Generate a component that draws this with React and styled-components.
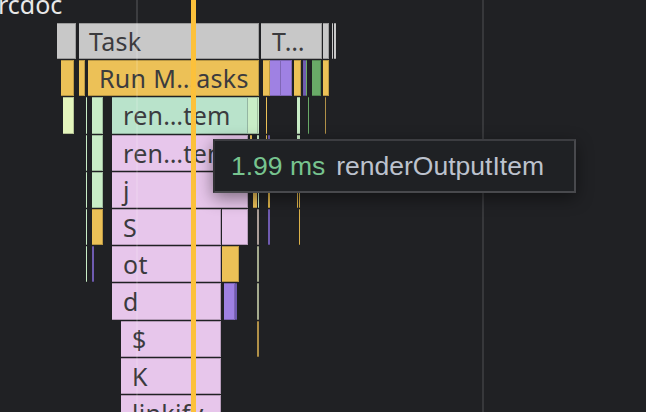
import React from "react";
import styled, { createGlobalStyle } from "styled-components";

const colors = {
  task: "#c8c8c8",
  yellow: "#ecc157",
  purple: "#9f81e3",
  deepPurple: "#6f5bb0",
  green: "#69aa67",
  pale: "#e4f5bd",
  mint: "#c9edc7",
  teal: "#b9e3cb",
  pink: "#e7c6eb",
  tan: "#b09048",
  sage: "#a5ab8e",
  taupe: "#ab9e98",
  sun: "#dcb24a",
};

// each row: [left, width, colour, label?, label inset?]
const rows = [
  [
    [57, 19, "task"],
    [79, 180, "task", "Task", 10],
    [261, 61, "task", "T…", 11],
    [323, 6, "task"],
    [332, 1, "task"],
    [333.5, 2.5, "task"],
  ],
  [
    [61, 13, "yellow"],
    [79, 6, "yellow"],
    [88, 171, "yellow", "Run M…asks", 11],
    [263, 7, "yellow"],
    [270, 10.5, "purple"],
    [281, 11, "purple"],
    [294, 6.5, "yellow"],
    [303, 3, "deepPurple"],
    [306, 1, "green"],
    [312, 9, "green"],
    [323, 6, "yellow"],
  ],
  [
    [63, 11, "pale"],
    [85.5, 1.5, "mint"],
    [92, 11, "mint"],
    [112, 136, "teal", "ren…tem", 11],
    [248, 9.5, "mint"],
    [258, 1, "mint"],
    [266, 1, "yellow"],
    [297, 3, "mint"],
    [308, 1, "green"],
    [325, 1, "tan"],
  ],
  [
    [85.5, 1.5, "mint"],
    [92, 11, "mint"],
    [112, 136, "pink", "ren…tem", 11],
    [250, 2, "yellow"],
    [257, 2, "mint"],
    [266, 1, "yellow"],
    [268, 1.5, "deepPurple"],
    [297, 3, "mint"],
  ],
  [
    [85.5, 1.5, "mint"],
    [92, 11, "mint"],
    [112, 136, "pink", "j", 11],
    [253, 4, "yellow"],
    [257.5, 1.5, "mint"],
    [268, 1.5, "sun"],
    [297, 1, "sun"],
    [299, 1, "sun"],
  ],
  [
    [85.5, 1.5, "mint"],
    [92, 10.5, "yellow"],
    [112, 109, "pink", "S", 11],
    [221.5, 26.5, "pink"],
    [257, 2, "taupe"],
    [268, 1.5, "deepPurple"],
    [299, 1, "sun"],
  ],
  [
    [85.5, 1.5, "mint"],
    [92, 1.5, "deepPurple"],
    [112, 109, "pink", "ot", 11],
    [222, 17, "yellow"],
    [257, 2, "sage"],
  ],
  [
    [112, 109, "pink", "d", 11],
    [224, 11, "purple"],
    [235, 2, "deepPurple"],
    [257, 2, "sage"],
  ],
  [
    [121, 100, "pink", "$", 11],
    [257, 2, "tan"],
  ],
  [[121, 100, "pink", "K", 11]],
  [[121, 100, "pink", "linkify", 11]],
];

const GlobalStyle = createGlobalStyle`
  html, body {
    margin: 0;
    padding: 0;
    background: #202124;
    overflow: hidden;
  }
`;

const Page = styled.div`
  position: relative;
  width: 646px;
  height: 412px;
  overflow: hidden;
  background: #202124;
  font-family: "Noto Sans", "Liberation Sans", sans-serif;
`;

const FrameName = styled.div`
  height: 23px;
  margin-top: -11px;
  margin-left: -14px;
  font-size: 25px;
  line-height: 30px;
  color: #e8e8e8;
  white-space: nowrap;
`;

const Chart = styled.div`
  display: flex;
  flex-direction: column;
  padding-top: 11px;
`;

const Row = styled.div`
  position: relative;
  height: 37.2px;
  flex: none;
`;

const Block = styled.div`
  position: absolute;
  top: 0;
  bottom: 1px;
  left: ${(p) => p.$left}px;
  width: ${(p) => p.$width}px;
  box-sizing: border-box;
  padding-left: ${(p) => p.$inset}px;
  background: ${(p) => colors[p.$kind]};
  border-top: 1px solid rgba(0, 0, 0, 0.22);
  border-bottom: 1px solid rgba(0, 0, 0, 0.22);
  border-right: ${(p) => (p.$width > 4 ? "1px solid rgba(0, 0, 0, 0.2)" : "none")};
  color: #3b3b3e;
  font-size: 25px;
  letter-spacing: 0.3px;
  line-height: 34px;
  white-space: nowrap;
  overflow: hidden;
`;

const GridLine = styled.div`
  position: absolute;
  top: 0;
  bottom: 0;
  left: ${(p) => p.$left}px;
  width: 2px;
  background: ${(p) => p.$color};
`;

const Marker = styled.div`
  position: absolute;
  top: 0;
  bottom: 0;
  left: 191px;
  width: 5px;
  background: #fcc13b;
`;

const Tooltip = styled.div`
  position: absolute;
  left: 213px;
  top: 139px;
  width: 363px;
  height: 54px;
  box-sizing: border-box;
  display: flex;
  align-items: center;
  gap: 11px;
  padding-left: 16px;
  background: #1f2124;
  border: 2px solid #48494d;
  border-left-color: #303134;
  border-top-color: #3c3d41;
  box-shadow: 0 5px 16px rgba(0, 0, 0, 0.45);
  font-family: "Liberation Sans", Arial, sans-serif;
  font-size: 26.5px;
  white-space: nowrap;
`;

const Duration = styled.span`
  color: #77c48f;
`;

const FunctionName = styled.span`
  color: #bcc2cd;
`;

export default function App() {
  return (
    <Page>
      <GlobalStyle />
      <FrameName>srcdoc</FrameName>
      <Chart>
        {rows.map((blocks, i) => (
          <Row key={i}>
            {blocks.map(([left, width, kind, label, inset], j) => (
              <Block key={j} $left={left} $width={width} $kind={kind} $inset={inset || 0}>
                {label}
              </Block>
            ))}
          </Row>
        ))}
      </Chart>
      <GridLine $left={136} $color="rgba(255, 255, 255, 0.13)" />
      <GridLine $left={482} $color="#37383b" />
      <Marker />
      <Tooltip>
        <Duration>1.99 ms</Duration>
        <FunctionName>renderOutputItem</FunctionName>
      </Tooltip>
    </Page>
  );
}
